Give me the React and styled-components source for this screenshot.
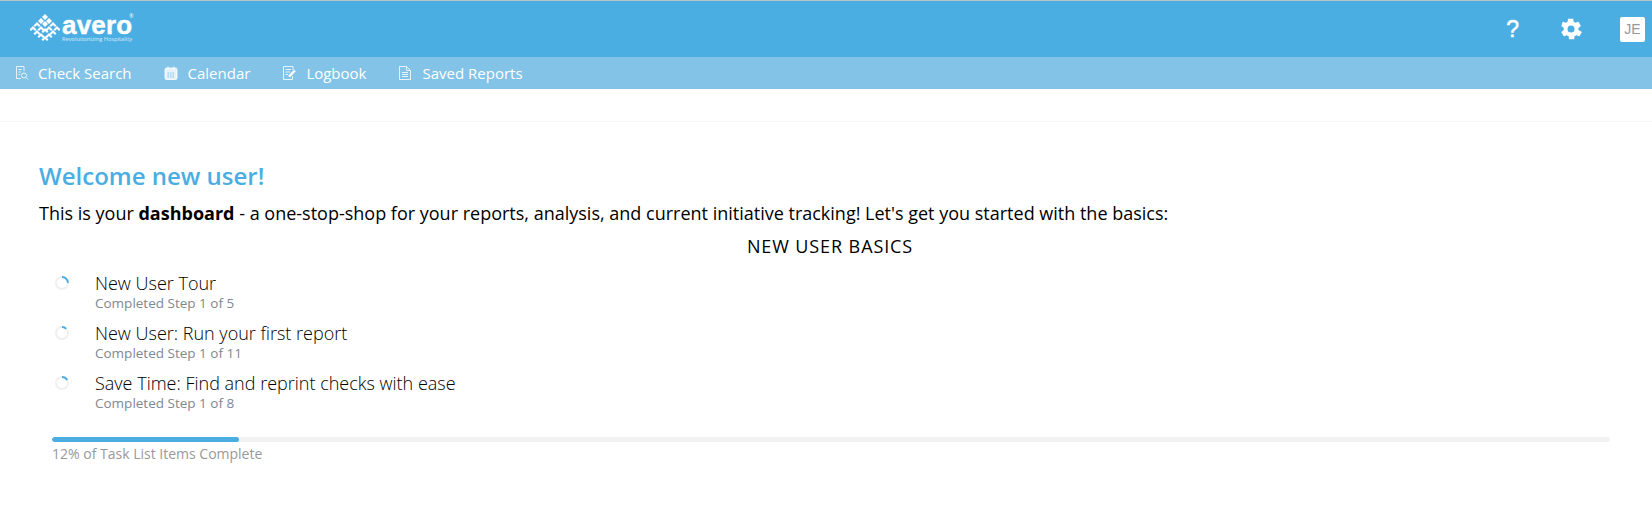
import React from "react";
import styled, { createGlobalStyle } from "styled-components";

const GlobalStyle = createGlobalStyle`
  html, body {
    margin: 0;
    padding: 0;
    background: #fff;
    font-family: "Open Sans", "Liberation Sans", sans-serif;
  }
`;

const Page = styled.div`
  width: 1652px;
  height: 507px;
  overflow: hidden;
`;

const Header = styled.header`
  height: 56px;
  background: #4aaee3;
  border-top: 1px solid #b9c2c8;
  display: flex;
  align-items: center;
  justify-content: space-between;
  padding: 0 7px 0 30px;
`;

const Logo = styled.div`
  display: flex;
  align-items: flex-start;
  gap: 2px;
  color: #fff;
  margin-top: -1px;
`;

const LogoText = styled.div`
  display: flex;
  flex-direction: column;
  position: relative;
`;

const LogoName = styled.span`
  font-family: "Liberation Sans", sans-serif;
  font-size: 26px;
  font-weight: 700;
  line-height: 23px;
  letter-spacing: 0.2px;
  -webkit-text-stroke: 0.4px #fff;
`;

const LogoTag = styled.span`
  font-size: 5.7px;
  line-height: 7px;
  margin-top: -1px;
  opacity: 0.75;
  white-space: nowrap;
`;

const Registered = styled.span`
  position: absolute;
  top: -1px;
  right: -1px;
  font-size: 5px;
  line-height: 7px;
`;

const HeaderTools = styled.div`
  display: flex;
  align-items: center;
`;

const HelpMark = styled.span`
  font-family: "Liberation Sans", sans-serif;
  font-size: 23px;
  font-weight: 400;
  line-height: 24px;
  color: #fff;
  -webkit-text-stroke: 0.5px #fff;
  margin-right: 40px;
`;

const Avatar = styled.div`
  width: 25px;
  height: 25px;
  margin-left: 37px;
  background: #fff;
  border-radius: 2px;
  color: #999;
  font-family: "Liberation Sans", sans-serif;
  font-size: 14px;
  display: flex;
  align-items: center;
  justify-content: center;
`;

const Nav = styled.nav`
  height: 32px;
  background: #82c3e7;
  display: flex;
  align-items: center;
  padding-left: 15px;
  gap: 32px;
`;

const NavItem = styled.a`
  display: flex;
  align-items: center;
  gap: 10px;
  color: #fff;
  font-size: 15px;
  white-space: nowrap;

  &:first-child {
    gap: 9px;
  }
`;

const Divider = styled.div`
  height: 32px;
  border-bottom: 1px solid #f8f8f8;
`;

const Content = styled.main`
  padding: 38px 31px 0 39px;
  color: #000;
`;

const Title = styled.h2`
  margin: 0;
  color: #4aaee3;
  font-size: 24px;
  font-weight: 600;
  line-height: 32px;
`;

const Intro = styled.p`
  margin: 9px 0 0;
  font-size: 18px;
  line-height: 24px;
`;

const SectionTitle = styled.h3`
  margin: 9px 0 0;
  font-size: 18px;
  font-weight: 400;
  line-height: 24px;
  letter-spacing: 0.9px;
  text-align: center;
`;

const TaskList = styled.ul`
  list-style: none;
  margin: 13px 0 0;
  padding: 0 0 0 15px;
`;

const Task = styled.li`
  display: flex;
  height: 50px;
`;

const SpinnerBox = styled.div`
  width: 41px;
  padding-top: 3px;
`;

const TaskName = styled.div`
  font-size: 18px;
  font-weight: 300;
  line-height: 24px;
  color: #000;
`;

const TaskStep = styled.div`
  font-size: 13.5px;
  line-height: 15px;
  margin-top: 1px;
  color: #808890;
`;

const ProgressTrack = styled.div`
  margin: 16px 0 0 13px;
  width: 1558px;
  height: 5px;
  background: #f2f2f2;
  border-radius: 3px;
  overflow: hidden;
`;

const ProgressFill = styled.div`
  height: 100%;
  background: #4aaee3;
  border-radius: 3px;
`;

const ProgressLabel = styled.div`
  margin: 2px 0 0 13px;
  font-size: 14px;
  line-height: 19px;
  color: #999;
`;

const solidDiamonds = [[15, 3], [11, 7], [19, 7], [15, 10]];
const roofDiamonds = [
  [7, 11], [23, 11], [3, 15], [11, 15], [19, 15], [27, 15],
  [7, 19], [15, 17], [23, 19], [11, 22], [19, 22], [15, 25],
];

const LogoMark = () => (
  <svg width="30" height="28" viewBox="0 0 30 28" fill="#fff">
    {solidDiamonds.map(([x, y]) => (
      <path key={`s${x}-${y}`} d={`M${x} ${y - 3}l3 3-3 3-3-3z`} />
    ))}
    {roofDiamonds.map(([x, y]) => (
      <path key={`r${x}-${y}`} d={`M${x} ${y - 3}l3.500 3.500-1.500 1.500-2-2-2 2-1.500-1.500z`} />
    ))}
  </svg>
);

const IconBase = ({ children }) => (
  <svg width="14" height="16" viewBox="0 0 14 16" fill="none" stroke="#fff" strokeOpacity="0.8" strokeWidth="1">
    {children}
  </svg>
);

const SearchDocIcon = () => (
  <IconBase>
    <path d="M9 6V1.500H1.500v12H6M3.500 4.500h3M3.500 7h2.500M3.500 9.500h1.500" />
    <circle cx="9" cy="10.500" r="2.500" />
    <path d="M11 12.500l2 2" />
  </IconBase>
);

const CalendarIcon = () => (
  <IconBase>
    <rect x="1" y="3" width="12" height="11.500" rx="1.500" fill="#fff" fillOpacity="0.8" />
    <path d="M4 1.500v3M10 1.500v3" />
    <path d="M3.500 8h7M3.500 10h7M3.500 12h7" stroke="#82c3e7" strokeOpacity="1" strokeDasharray="1.500 1" />
  </IconBase>
);

const LogbookIcon = () => (
  <IconBase>
    <path d="M11 5V1.500H1.500v13H10.500V11M3.500 4.500h5.500M3.500 7h4.500M3.500 9.500h2.500" />
    <path d="M7 11.500l6-6" strokeWidth="2.400" strokeOpacity="1" />
  </IconBase>
);

const ReportIcon = () => (
  <IconBase>
    <path d="M1.500 1.500h7l4 4v9h-11zM8.500 1.500v4h4M4 7.500h6M4 9.500h6M4 11.500h6" />
  </IconBase>
);

const GearIcon = () => (
  <svg width="24" height="24" viewBox="0 0 24 24" fill="#fff">
    <path d="M19.4 13c.1-.3.1-.7.1-1s0-.7-.1-1l2.200-1.700c.2-.2.3-.4.100-.7l-2.100-3.600c-.1-.2-.4-.3-.6-.2l-2.600 1c-.5-.4-1.100-.8-1.800-1l-.4-2.700c0-.3-.2-.4-.5-.4H9.500c-.3 0-.5.100-.5.400l-.4 2.700c-.6.200-1.200.6-1.800 1l-2.600-1c-.2-.1-.5 0-.6.200L2.500 8.600c-.2.300-.1.500.1.700L4.800 11c-.1.300-.1.700-.1 1s0 .7.100 1l-2.200 1.700c-.2.200-.3.400-.1.700l2.100 3.600c.1.200.4.300.6.200l2.600-1c.5.400 1.100.8 1.800 1l.4 2.700c0 .3.200.4.500.4h4.200c.3 0 .5-.1.500-.4l.4-2.700c.6-.2 1.200-.6 1.800-1l2.600 1c.2.100.5 0 .6-.2l2.100-3.600c.2-.3.100-.5-.1-.7zM12 15.500a3.500 3.500 0 1 1 0-7 3.500 3.500 0 0 1 0 7z" />
  </svg>
);

// ring with a short blue arc, the arc length follows the step progress
const Spinner = ({ progress }) => {
  const r = 6;
  const c = 2 * Math.PI * r;
  return (
    <svg width="16" height="16" viewBox="0 0 16 16" fill="none" strokeWidth="2">
      <circle cx="8" cy="8" r={r} stroke="#f0f0f0" />
      <circle
        cx="8"
        cy="8"
        r={r}
        stroke="#4aaee3"
        strokeDasharray={`${c * progress} ${c}`}
        transform="rotate(-90 8 8)"
      />
    </svg>
  );
};

const navItems = [
  { label: "Check Search", icon: <SearchDocIcon /> },
  { label: "Calendar", icon: <CalendarIcon /> },
  { label: "Logbook", icon: <LogbookIcon /> },
  { label: "Saved Reports", icon: <ReportIcon /> },
];

const tasks = [
  { name: "New User Tour", step: "Completed Step 1 of 5", progress: 0.24 },
  { name: "New User: Run your first report", step: "Completed Step 1 of 11", progress: 0.12 },
  { name: "Save Time: Find and reprint checks with ease", step: "Completed Step 1 of 8", progress: 0.16 },
];

const App = () => (
  <Page>
    <GlobalStyle />
    <Header>
      <Logo>
        <LogoMark />
        <LogoText>
          <LogoName>avero</LogoName>
          <Registered>®</Registered>
          <LogoTag>Revolutionizing Hospitality</LogoTag>
        </LogoText>
      </Logo>
      <HeaderTools>
        <HelpMark>?</HelpMark>
        <GearIcon />
        <Avatar>JE</Avatar>
      </HeaderTools>
    </Header>
    <Nav>
      {navItems.map((item) => (
        <NavItem key={item.label}>
          {item.icon}
          {item.label}
        </NavItem>
      ))}
    </Nav>
    <Divider />
    <Content>
      <Title>Welcome new user!</Title>
      <Intro>
        This is your <b>dashboard</b> - a one-stop-shop for your reports, analysis, and current initiative tracking! Let's get you started with the basics:
      </Intro>
      <SectionTitle>NEW USER BASICS</SectionTitle>
      <TaskList>
        {tasks.map((task) => (
          <Task key={task.name}>
            <SpinnerBox>
              <Spinner progress={task.progress} />
            </SpinnerBox>
            <div>
              <TaskName>{task.name}</TaskName>
              <TaskStep>{task.step}</TaskStep>
            </div>
          </Task>
        ))}
      </TaskList>
      <ProgressTrack>
        <ProgressFill style={{ width: "12%" }} />
      </ProgressTrack>
      <ProgressLabel>12% of Task List Items Complete</ProgressLabel>
    </Content>
  </Page>
);

export default App;
